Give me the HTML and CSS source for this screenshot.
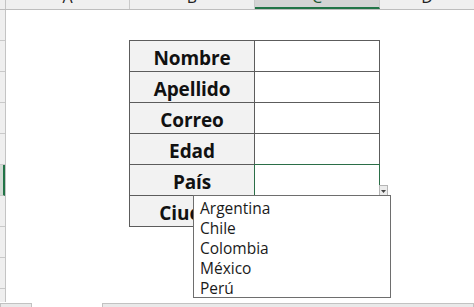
FILE: index.html
```html
<!DOCTYPE html>
<html lang="es">
<head>
<meta charset="utf-8">
<link rel="stylesheet" href="styles.css">
</head>
<body>
<div class="app">
  <div class="colhead">
    <div class="corner"></div>
    <div class="ch ch-a"><span>A</span></div>
    <div class="ch ch-b"><span>B</span></div>
    <div class="ch ch-c sel"><span>C</span></div>
    <div class="ch ch-d"><span>D</span></div>
  </div>
  <div class="body">
    <div class="rowhead">
      <div class="rh"></div>
      <div class="rh"></div>
      <div class="rh"></div>
      <div class="rh"></div>
      <div class="rh"></div>
      <div class="rh sel"></div>
      <div class="rh"></div>
      <div class="rh"></div>
      <div class="rh"></div>
    </div>
    <div class="sheet">
      <div class="form">
        <div class="lbl">Nombre</div><div class="val"></div>
        <div class="lbl">Apellido</div><div class="val"></div>
        <div class="lbl">Correo</div><div class="val"></div>
        <div class="lbl">Edad</div><div class="val"></div>
        <div class="lbl">País</div><div class="val active"><div class="ddbtn"><svg width="5" height="3" viewBox="0 0 5 3"><path d="M0 0h5L2.5 3z" fill="#444"/></svg></div></div>
        <div class="lbl">Ciudad</div><div class="val"></div>
      </div>
      <div class="list">
        <div class="item">Argentina</div>
        <div class="item">Chile</div>
        <div class="item">Colombia</div>
        <div class="item">México</div>
        <div class="item">Perú</div>
      </div>
    </div>
  </div>
  <div class="bottom">
    <div class="tab t1"></div>
    <div class="tab t2"></div>
  </div>
</div>
</body>
</html>
```
FILE: styles.css
```css
html, body { margin: 0; padding: 0; background: #fff; }
.app { width: 474px; height: 307px; overflow: hidden; display: flex; flex-direction: column; font-family: "Open Sans", "Liberation Sans", sans-serif; }
.colhead { display: flex; height: 10px; flex: none; background: #efefef; border-bottom: 1px solid #bdbdbd; box-sizing: border-box; }
.corner { width: 6px; border-right: 1px solid #c4c4c4; box-sizing: border-box; }
.ch { overflow: hidden; box-sizing: border-box; border-right: 1px solid #c9c9c9; display: flex; justify-content: center; color: #222; font-size: 16px; }
.ch span { display: block; line-height: 16px; margin-top: -11px; }
.ch-a { width: 124px; }
.ch-b { width: 125px; }
.ch-c { width: 125px; }
.ch-d { flex: 1; border-right: 0; }
.ch.sel { background: #d4d4d4; border-bottom: 2px solid #217346; color: #1d5a36; }
.body { flex: 1; display: flex; min-height: 0; }
.rowhead { width: 6px; flex: none; background: #efefef; border-right: 1px solid #c4c4c4; box-sizing: border-box; display: flex; flex-direction: column; }
.rh { height: 31px; flex: none; border-bottom: 1px solid #c9c9c9; box-sizing: border-box; }
.rh.sel { background: #d3dbd5; border-right: 2px solid #217346; }
.sheet { flex: 1; position: relative; }
.form { margin: 30px 0 0 123px; width: max-content; display: grid; grid-template-columns: 124px 124px; grid-auto-rows: 30px; gap: 1px; background: #5c5c5c; border: 1px solid #5c5c5c; }
.lbl { background: #f2f2f2; font-weight: 700; font-size: 19px; color: #111; display: flex; align-items: center; justify-content: center; letter-spacing: -0.1px; padding-top: 3px; box-sizing: border-box; }
.val { background: #fff; position: relative; }
.val.active { outline: 1px solid #2b6e47; }
.ddbtn { position: absolute; right: -9px; bottom: -2px; width: 9px; height: 12px; background: #ececec; border: 1px solid #b5b5b5; box-sizing: border-box; display: flex; align-items: center; justify-content: center; }
.list { position: absolute; left: 187px; top: 185px; width: 198px; height: 103px; box-sizing: border-box; background: #fff; border: 1px solid #6e6e6e; padding: 2px 0 0 6px; font-size: 15.5px; color: #1a1a1a; }
.item { height: 20px; line-height: 20px; }
.bottom { height: 5px; flex: none; background: #fff; display: flex; align-items: flex-end; position: relative; }
.tab { height: 4px; background: #e9e9e9; border: 1px solid #c2c2c2; border-bottom: 0; box-sizing: border-box; }
.t1 { width: 32px; }
.t2 { margin-left: 70px; flex: 1; }
```
